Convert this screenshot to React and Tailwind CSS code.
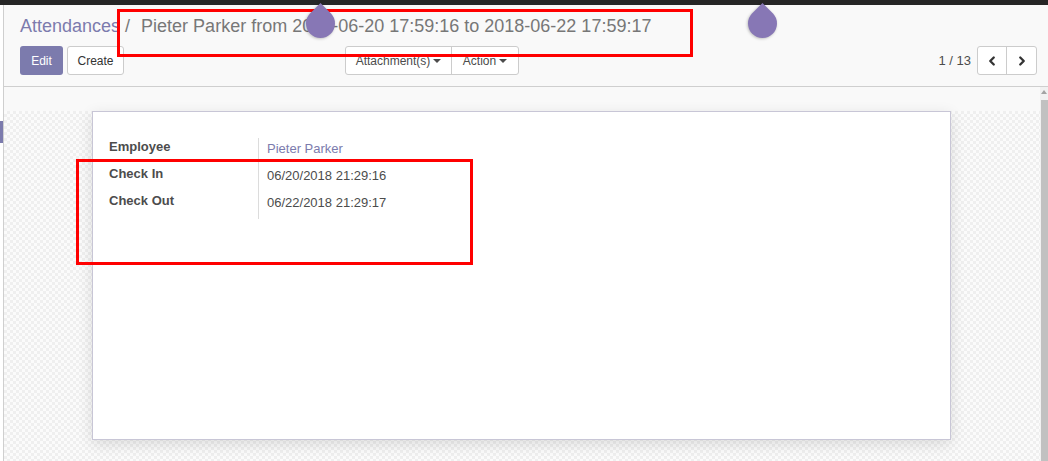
import { ChevronLeft, ChevronRight } from "lucide-react";

function Caret() {
  return (
    <span className="inline-block w-0 h-0 ml-[3px] align-middle border-x-[4px] border-t-[4px] border-x-transparent border-t-[#4c4c4c]" />
  );
}

function Drop({ className }) {
  return (
    <div
      className={`absolute w-[29px] h-[29px] rotate-45 rounded-[50%] rounded-tl-none bg-[#8777b5] shadow-[0_1px_3px_rgba(0,0,0,0.25)] ${className}`}
    />
  );
}

const rows = [
  { label: "Employee", value: "Pieter Parker", link: true },
  { label: "Check In", value: "06/20/2018 21:29:16" },
  { label: "Check Out", value: "06/22/2018 21:29:17" },
];

export default function App() {
  return (
    <div className="relative w-[1048px] h-[461px] overflow-hidden bg-white font-['Liberation_Sans',Arial,sans-serif] text-[13px] text-[#4c4c4c]">
      {/* top bar */}
      <div className="h-[5px] bg-[#262626]" />

      <div className="flex h-[456px]">
        {/* left strip */}
        <div className="w-[3px] bg-white flex flex-col">
          <div className="h-[116px]" />
          <div className="h-[22px] bg-[#7c7bad]" />
        </div>

        <div className="flex-1 flex flex-col border-l border-[#cfcfcf]">
          {/* control panel */}
          <div className="h-[82px] bg-[#f9f9f9] border-b border-[#cfcfcf] pl-[16px] pt-[11px]">
            <div className="flex items-baseline text-[18px] leading-[21px]">
              <span className="text-[#7c7bad]">Attendances</span>
              <span className="ml-[5px] mr-[11px] text-[#777]">/</span>
              <span className="text-[#777]">
                Pieter Parker from 2018-06-20 17:59:16 to 2018-06-22 17:59:17
              </span>
            </div>

            <div className="flex items-center mt-[9px] text-[12px]">
              <div className="w-[325px] flex gap-[4px]">
                <button className="h-[29px] w-[43px] rounded-[3px] bg-[#7c7bad] text-white">
                  Edit
                </button>
                <button className="h-[29px] w-[57px] rounded-[3px] bg-white border border-[#cccccc] text-[#333]">
                  Create
                </button>
              </div>

              <div className="flex h-[29px] rounded-[3px] border border-[#cccccc] bg-white text-[#4c4c4c]">
                <button className="w-[106px] flex items-center justify-center border-r border-[#cccccc]">
                  Attachment(s)
                  <Caret />
                </button>
                <button className="w-[66px] flex items-center justify-center">
                  Action
                  <Caret />
                </button>
              </div>

              <div className="ml-auto mr-[11px] flex items-center">
                <span className="text-[13px] text-[#4c4c4c] mr-[6px]">1 / 13</span>
                <div className="flex h-[29px] rounded-[3px] border border-[#cccccc] bg-white">
                  <button className="w-[29px] flex items-center justify-center border-r border-[#cccccc]">
                    <ChevronLeft size={14} strokeWidth={4} color="#333" />
                  </button>
                  <button className="w-[29px] flex items-center justify-center">
                    <ChevronRight size={14} strokeWidth={4} color="#333" />
                  </button>
                </div>
              </div>
            </div>
          </div>

          <div className="flex flex-1">
            {/* form area */}
            <div className="flex-1 flex flex-col bg-[#f9f9f9]">
              <div className="h-[24px]" />
              <div className="flex-1 pl-[88px] bg-[image:repeating-conic-gradient(#efefef_0_25%,#fbfbfb_0_50%)] bg-[length:6px_6px]">
                <div className="w-[859px] h-[329px] bg-white border border-[#c8c6d6] shadow-[0_4px_14px_rgba(0,0,0,0.12)] pl-[16px] pt-[26px]">
                  {rows.map((r) => (
                    <div key={r.label} className="flex h-[27px]">
                      <div className="w-[150px] pt-[1px] leading-[15px] font-bold text-[#4c4c4c] border-r border-[#dcdcdc]">
                        {r.label}
                      </div>
                      <div
                        className={`pl-[8px] pt-[3px] leading-[15px] ${
                          r.link ? "text-[#7c7bad]" : "text-[#4c4c4c]"
                        }`}
                      >
                        {r.value}
                      </div>
                    </div>
                  ))}
                </div>
              </div>
            </div>

            {/* scrollbar */}
            <div className="w-[8px] bg-[#f1f1f1] flex flex-col items-center">
              <span className="mt-[3px] w-0 h-0 border-x-[3px] border-b-[4px] border-x-transparent border-b-[#a3a3a3]" />
              <div className="mt-[6px] w-[7px] flex-1 bg-[#c1c1c1]" />
            </div>
          </div>
        </div>
      </div>

      {/* annotation overlays */}
      <div className="absolute left-[117px] top-[9px] w-[576px] h-[48px] border-[3px] border-[#ff0000]" />
      <div className="absolute left-[76px] top-[159px] w-[397px] h-[106px] border-[3px] border-[#ff0000]" />
      <Drop className="left-[306px] top-[9px]" />
      <Drop className="left-[748px] top-[9px]" />
    </div>
  );
}
